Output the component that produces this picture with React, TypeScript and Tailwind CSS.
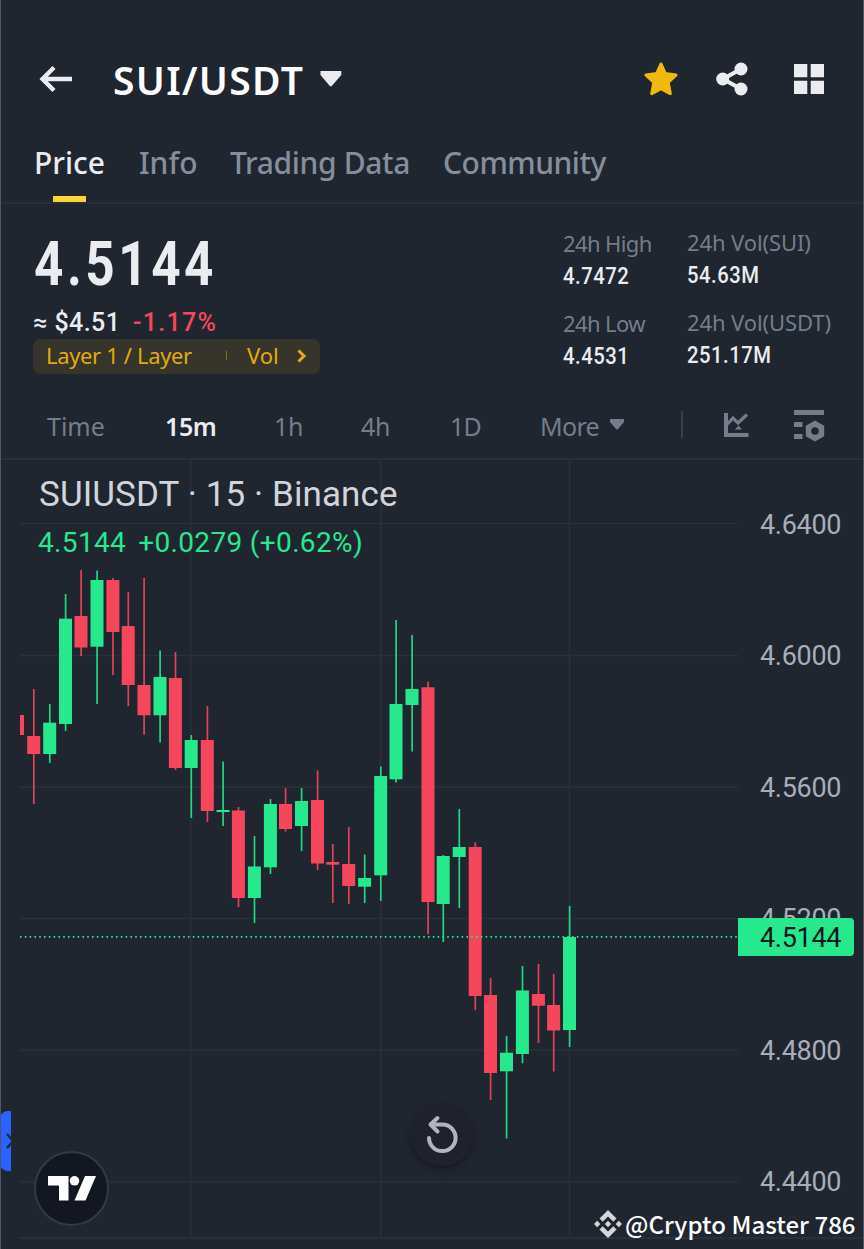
import React from "react";

type Candle = [x: number, high: number, top: number, bottom: number, low: number, up: 0 | 1];

const candles: Candle[] = [
  [33.7, 689, 736, 754, 804, 0],
  [49.7, 704, 722.7, 754, 763, 1],
  [65.5, 594, 618.7, 724, 731, 1],
  [81, 570, 616, 647.5, 656, 0],
  [97, 570.5, 580, 646.7, 704, 1],
  [112.9, 578, 580, 632, 675, 0],
  [128.2, 592, 626, 685, 706, 0],
  [144, 578, 685, 715.3, 734.7, 0],
  [160, 650.5, 677, 715.3, 742.5, 1],
  [175.4, 652, 678, 768, 770, 0],
  [191.2, 735, 740, 768, 818, 1],
  [207.3, 706, 740, 811, 822, 0],
  [223, 761.5, 810, 812, 826, 1],
  [238.4, 807, 810.5, 898, 907, 0],
  [254.4, 836, 866.5, 898, 923, 1],
  [270.4, 799, 804, 867.3, 874, 1],
  [285.5, 788, 804, 829, 831.5, 0],
  [301.5, 788, 801, 826, 851, 1],
  [317.5, 770.5, 800, 863.5, 870, 0],
  [332.7, 844, 862, 864.7, 903, 0],
  [348.7, 827, 864, 886, 904, 0],
  [364.6, 854.5, 878, 886.7, 903, 1],
  [380.7, 766.5, 776, 875.3, 901, 1],
  [396, 620, 704, 779.3, 782.5, 1],
  [412, 635, 689, 705, 751.5, 1],
  [428, 681.7, 687.3, 902, 934, 0],
  [443.2, 855, 856, 904, 942, 1],
  [459.2, 809, 847, 857, 908, 1],
  [475.2, 842.3, 847, 996, 1010, 0],
  [490.5, 978, 995, 1073, 1100, 0],
  [506.5, 1036, 1052.7, 1071.3, 1138.5, 1],
  [522.4, 966, 990.5, 1054, 1063.3, 1],
  [538.4, 964, 994, 1005.7, 1043, 0],
  [553.6, 974, 1005, 1030.5, 1071.5, 0],
  [569.5, 906, 937, 1030, 1047, 1],
];

const gridY = [523.5, 655.5, 787, 918.5, 1050, 1181.7];
const gridX = [190.8, 380.7, 569.6];

function Chart() {
  return (
    <svg className="block h-[789px] w-[738px] shrink-0" viewBox="0 460 738 789">
      <g stroke="#2b303b" strokeWidth="1.4">
        {gridY.map((y) => (
          <line key={y} x1="20" x2="738" y1={y} y2={y} />
        ))}
        {gridX.map((x) => (
          <line key={x} x1={x} x2={x} y1="460" y2="1237" />
        ))}
      </g>
      <rect x="20" y="715" width="4" height="20" fill="#f6465d" />
      {candles.map(([x, high, top, bottom, low, up]) => (
        <g key={x} fill={up ? "#25e98c" : "#f6465d"}>
          <rect x={x - 0.75} y={high} width="1.7" height={low - high} opacity="0.9" />
          <rect x={x - 6.5} y={top} width="13" height={bottom - top} />
        </g>
      ))}
      <line x1="20" x2="738" y1="936.8" y2="936.8" stroke="#25e98c" strokeWidth="1.7" strokeDasharray="1.6 3.2" />
    </svg>
  );
}

function Header() {
  return (
    <header className="flex h-[138px] items-center pt-5 pr-[40px] pl-[38px]">
      <svg className="h-8 w-9" viewBox="0 0 36 32" fill="none" stroke="#eaecef" strokeWidth="4.4">
        <path d="M34 16H5M16 4.5 4.5 16 16 27.5" />
      </svg>
      <h1 className="ml-[39px] w-[193px] pt-px text-[39px] leading-none font-semibold tracking-[1.3px] whitespace-nowrap text-white">
        SUI/USDT
      </h1>
      <svg className="ml-[14px] h-4 w-[22px]" viewBox="0 0 22 16" fill="#eaecef">
        <path d="M.5 0h20.8v4L12 14.800q-1.200 1-2.400 0L.5 4z" />
      </svg>
      <div className="ml-auto flex items-center">
        <svg className="mr-px h-[34px] w-[34px]" viewBox="0 0 34 34" fill="#f0b90b" stroke="#f0b90b" strokeWidth="3.2" strokeLinejoin="round">
          <path d="m17 2.200 4.300 9.400 10.600 1.400-7.800 7.200 2.100 11.300-9.200-4.900-9.200 4.900 2.100-11.300L2.100 13l10.600-1.400z" />
        </svg>
        <svg className="ml-[37px] h-[34px] w-8" viewBox="0 0 32 34" fill="#eaecef">
          <path d="M7 17 25 7M7 17l18 10" stroke="#eaecef" strokeWidth="4.200" />
          <circle cx="6.700" cy="17" r="6.500" />
          <circle cx="25" cy="7" r="6.500" />
          <circle cx="25" cy="27" r="6.500" />
        </svg>
        <svg className="ml-[46px] h-[30px] w-[30px]" viewBox="0 0 30 30" fill="#eaecef">
          <path d="M0 0h13.300v13.300H0zM16.700 0H30v13.300H16.700zM0 16.700h13.300V30H0zM16.700 16.700H30V30H16.700z" />
        </svg>
      </div>
    </header>
  );
}

function Tabs() {
  return (
    <nav className="flex h-[66px] border-b-2 border-[#282e39] pl-[34px] text-[30px] leading-[50px] font-medium whitespace-nowrap text-[#848e9c]">
      <div className="flex w-[105px] flex-col">
        <span className="text-[#eaecef]">Price</span>
        <i className="mt-[8px] ml-[19px] h-[7px] w-[33px] bg-[#fcd535]" />
      </div>
      <span className="w-[91px]">Info</span>
      <span className="w-[213px] tracking-[-0.35px]">Trading Data</span>
      <span className="tracking-[-0.5px]">Community</span>
    </nav>
  );
}

function Stat({ label, value, narrow }: { label: string; value: string; narrow?: boolean }) {
  return (
    <div className="h-[80px] whitespace-nowrap">
      <div className={narrow ? "text-[22px] leading-[30px] tracking-[-0.6px] text-[#747d8b]" : "text-[22px] leading-[30px] tracking-[-0.1px] text-[#747d8b]"}>
        {label}
      </div>
      <div className="origin-left scale-x-88 pt-[2px] font-['Roboto'] text-[23px] leading-[33px] font-medium tracking-[0.6px] text-[#eaecef]">
        {value}
      </div>
    </div>
  );
}

function Summary() {
  return (
    <section className="flex h-[187px]">
      <div className="w-[528px] pl-[33px]">
        <div className="h-[99px] pt-[29px] font-['Roboto'] text-[61px] leading-[62px] font-bold tracking-[4.2px] text-[#eaecef]">
          <span className="ml-px inline-block origin-left scale-x-84">4.5144</span>
        </div>
        <div className="flex h-[36px] items-center pt-[3px] font-['Roboto'] text-[25px] font-medium whitespace-nowrap">
          <span className="w-[100px] tracking-[0.45px] text-[#eaecef]">≈ $4.51</span>
          <span className="tracking-[1.3px] text-[#f6465d]">-1.17%</span>
        </div>
        <div className="flex h-[35px] w-[287px] items-center rounded-lg bg-[#37342b] pb-[2px] pl-[13px] text-[22px] text-[#e0ac0c]">
          <span className="w-[180px] tracking-[-0.35px] whitespace-nowrap">Layer 1 / Layer</span>
          <i className="h-[9px] w-px bg-[#8a6f1b]" />
          <span className="ml-[20px] w-[50px]">Vol</span>
          <svg className="mt-px h-[14px] w-[10px]" viewBox="0 0 10 14" fill="none" stroke="#e0ac0c" strokeWidth="3">
            <path d="m1.500 1.500 5.500 5.500-5.500 5.500" />
          </svg>
        </div>
      </div>
      <div className="w-[125px] pt-[24px] pl-[35px]">
        <Stat narrow label="24h High" value="4.7472" />
        <Stat narrow label="24h Low" value="4.4531" />
      </div>
      <div className="pt-[23px] pl-[34px]">
        <Stat label="24h Vol(SUI)" value="54.63M" />
        <Stat label="24h Vol(USDT)" value="251.17M" />
      </div>
    </section>
  );
}

function Toolbar() {
  return (
    <div className="flex h-[69px] items-center border-b-2 border-[#292e39] pl-[47px] text-[25px] whitespace-nowrap text-[#747d8b]">
      <span className="w-[118px] pt-[4px]">Time</span>
      <span className="w-[109px] pt-[4px] font-semibold tracking-[-0.4px] text-[#eaecef]">15m</span>
      <span className="w-[87px] pt-[4px] tracking-[-0.4px]">1h</span>
      <span className="w-[89px] pt-[4px] tracking-[-0.4px]">4h</span>
      <span className="w-[90px] pt-[4px] tracking-[-0.8px]">1D</span>
      <span className="w-[70px] pt-[4px] tracking-[-0.7px]">More</span>
      <svg className="h-[11px] w-[14px]" viewBox="0 0 14 11" fill="#747d8b">
        <path d="M0 0h14v3L8 10q-1 1-2 0L0 3z" />
      </svg>
      <i className="ml-[57px] h-[27px] w-[2px] bg-[#373e49]" />
      <svg className="ml-[41px] h-[26px] w-[25px]" viewBox="0 0 25 26" fill="none" stroke="#747d8b" strokeWidth="4">
        <path d="M2 1v23M0 23h24.500" />
        <path d="m3 12.500 6-6.500 5 5L23 2.500" strokeWidth="3.200" />
        <path d="M11 17.500h7l-3.500-4z" fill="#747d8b" stroke="none" />
      </svg>
      <svg className="mt-[2px] ml-[44px] h-[32px] w-[32px]" viewBox="0 0 32 32" fill="#747d8b">
        <path d="M1 0h30v5H1zM1 12h8.500v5H1zM1 24h8.500v5H1z" />
        <path fillRule="evenodd" d="M22 10.500 31.200 15.700v10.600L22 31.500l-9.200-5.200V15.700zM22 17.200a3.800 3.800 0 1 0 0 7.600 3.800 3.800 0 0 0 0-7.600z" />
      </svg>
    </div>
  );
}

function PriceAxis() {
  return (
    <div className="relative flex flex-col pt-[50px] pl-[22px] font-['Roboto'] text-[27px] leading-[31px] tracking-[-0.3px] text-[#a9adb8]">
      {["4.6400", "4.6000", "4.5600", "4.5200", "4.4800", "4.4400"].map((p) => (
        <span key={p} className="mb-[100.400px] h-[31px]">{p}</span>
      ))}
      <div className="absolute top-[458px] left-0 h-[38px] w-[116px] rounded-r bg-[#25e98c] pl-[22px] leading-[40px] text-[#10161c]">
        4.5144
      </div>
    </div>
  );
}

export default function App() {
  return (
    <div className="relative h-[1249px] w-[864px] overflow-hidden border-x border-[#505661] bg-[#202630] font-['Noto_Sans',sans-serif]">
      <div className="-mx-px">
        <Header />
        <Tabs />
        <Summary />
        <Toolbar />
        <main className="relative flex h-[789px]">
          <Chart />
          <PriceAxis />
          <div className="absolute top-[14px] left-[38px] font-['Roboto'] whitespace-nowrap">
            <div className="ml-px text-[35px] leading-[41px] tracking-[0.1px] text-[#d1d4dc]">SUIUSDT · 15 · Binance</div>
            <div className="mt-[12px] text-[28px] leading-[31px] tracking-[0.35px] text-[#25e98c]">
              <span className="mr-[12px]">4.5144</span>
              <span>+0.0279 (+0.62%)</span>
            </div>
          </div>
          <div className="absolute top-[777px] left-[20px] h-[2px] w-[843px] bg-[#292e39]" />
          <div className="absolute top-[651px] left-0 flex h-[60px] w-[11px] items-center overflow-hidden rounded-l-lg bg-[#2962ff] pl-[6px]">
            <svg className="h-4 w-2 shrink-0" viewBox="0 0 8 16" fill="none" stroke="#1b2433" strokeWidth="2.200">
              <path d="m1 1 6 7-6 7" />
            </svg>
          </div>
          <div className="absolute top-[691px] left-[34px] flex h-[75px] w-[75px] items-center justify-center rounded-full border-2 border-[#353943] bg-[#131722]">
            <svg className="h-[25px] w-[48px]" viewBox="0 0 48 25" fill="#fff">
              <path d="M0 0h20.500v24.500H11V9.500H0zM37 0h11L37.500 24.500H26.500z" />
              <circle cx="26.500" cy="4.800" r="4.800" />
            </svg>
          </div>
          <div className="absolute top-[644px] left-[411px] flex h-[62px] w-[62px] items-center justify-center rounded-full bg-[#1f222d] shadow-[0_3px_6px_rgba(15,17,24,0.6)]">
            <svg className="h-[40px] w-[34px]" viewBox="0 0 34 40" fill="none" stroke="#b2b5be" strokeWidth="4" strokeLinecap="round" strokeLinejoin="round">
              <path d="M4 23a13.300 13.300 0 1 0 13.300-13.500H6" />
              <path d="m12.500 3-7 6.500 7 7" />
            </svg>
          </div>
          <div className="absolute top-[746px] left-[594px] flex h-[36px] items-center font-['Noto_Sans_CJK_SC'] text-[24px] font-medium tracking-[0.05px] whitespace-nowrap text-white">
            <svg className="mr-[3px] h-[28px] w-[28px]" viewBox="0 0 28 28" fill="#d4d6d9">
              <path d="m14 0 8.500 8.500-3.200 3.200L14 6.400l-5.300 5.300-3.200-3.200zM14 28l8.500-8.500-3.200-3.200-5.300 5.300-5.300-5.300-3.200 3.200zM3.200 10.800 6.400 14l-3.200 3.200L0 14zM14 10.800l3.200 3.200-3.200 3.200-3.200-3.200zM24.800 10.800 28 14l-3.200 3.200-3.200-3.200z" />
            </svg>
            @Crypto Master 786
          </div>
        </main>
      </div>
    </div>
  );
}
